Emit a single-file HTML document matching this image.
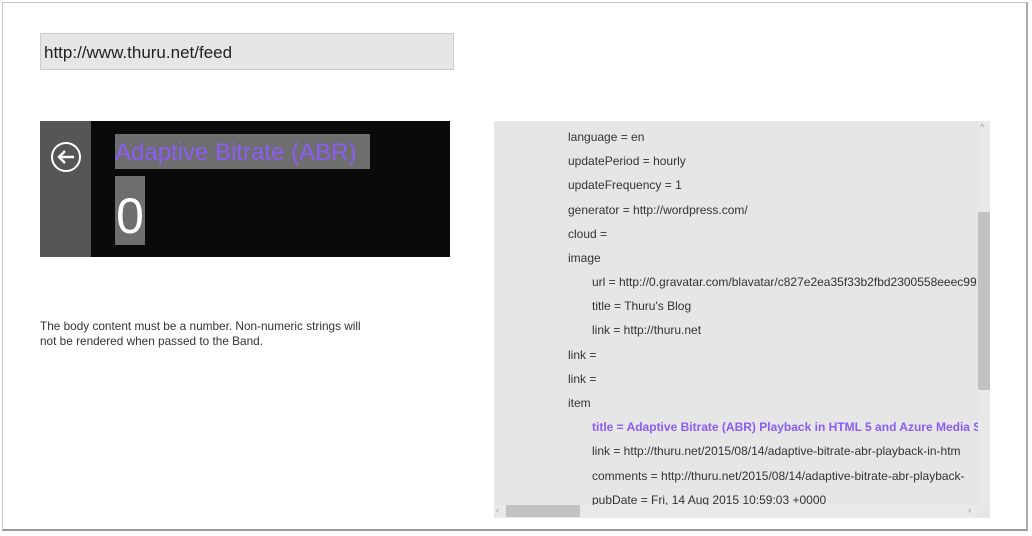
<!DOCTYPE html>
<html><head><meta charset="utf-8"><style>
body{margin:0;width:1032px;height:536px;background:#fff;position:relative;overflow:hidden;font-family:"Liberation Sans",sans-serif}
.frame{position:absolute;left:2px;top:2px;width:1026px;height:529px;border:1px solid #c8c8c8;border-bottom:2px solid #999;border-right:2px solid #aaa;box-sizing:border-box}
.tb{position:absolute;left:40px;top:33px;width:414px;height:37px;background:#e6e6e6;border:1px solid #ccc;box-sizing:border-box;font-size:17px;color:#222;padding:9px 0 0 3px}
.tile{position:absolute;left:40px;top:121px;width:410px;height:136px;background:#0a0a0a}
.side{position:absolute;left:0;top:0;width:51px;height:136px;background:#565656}
.ttl{position:absolute;left:75px;top:13px;height:35px;width:255px;background:#6e6e6e;color:#8b5cf6;font-size:24px;line-height:37px;white-space:nowrap}
.zero{position:absolute;left:75px;top:55px;width:30px;height:69px;background:#6e6e6e;color:#fff;font-size:50px;line-height:80px;text-align:center}
.body{position:absolute;left:40px;top:319px;font-size:11.8px;line-height:15px;color:#333}
.panel{position:absolute;left:494px;top:121px;width:496px;height:397px;background:#e6e6e6;overflow:hidden;font-size:12px;color:#333}
.l{position:absolute;white-space:nowrap}
.vs{position:absolute;right:0;top:0;width:12px;height:384px;background:#e9e9e9}
.vt{position:absolute;left:484px;top:91px;width:12px;height:178px;background:#c2c2c2}
.hs{position:absolute;left:0;bottom:0;width:484px;height:13px;background:#e9e9e9}
.ht{position:absolute;left:12px;top:384px;width:74px;height:12px;background:#c2c2c2}
.ar{position:absolute;font-size:9px;color:#999}
</style></head><body>
<div class="frame"></div>
<div class="tb">http://www.thuru.net/feed</div>
<div class="tile"><div class="side">
<svg width="51" height="136" style="position:absolute;left:0;top:0"><circle cx="26" cy="36" r="14" fill="none" stroke="#fff" stroke-width="2"/><path d="M34 36H19M25 30l-6 6 6 6" fill="none" stroke="#fff" stroke-width="2.4"/></svg></div>
<div class="ttl">Adaptive Bitrate (ABR)</div>
<div class="zero">0</div></div>
<div class="body">The body content must be a number. Non-numeric strings will<br>not be rendered when passed to the Band.</div>
<div class="panel">
<div class="l" style="left:74px;top:9px">language = en</div>
<div class="l" style="left:74px;top:33px">updatePeriod = hourly</div>
<div class="l" style="left:74px;top:57px">updateFrequency = 1</div>
<div class="l" style="left:74px;top:82px">generator = http://wordpress.com/</div>
<div class="l" style="left:74px;top:106px">cloud =</div>
<div class="l" style="left:74px;top:130px">image</div>
<div class="l" style="left:98px;top:154px">url = http://0.gravatar.com/blavatar/c827e2ea35f33b2fbd2300558eeec99</div>
<div class="l" style="left:98px;top:178px">title = Thuru's Blog</div>
<div class="l" style="left:98px;top:202px">link = http://thuru.net</div>
<div class="l" style="left:74px;top:227px">link =</div>
<div class="l" style="left:74px;top:251px">link =</div>
<div class="l" style="left:74px;top:275px">item</div>
<div class="l" style="left:98px;top:299px;color:#8b5cf6;font-weight:bold">title = Adaptive Bitrate (ABR) Playback in HTML 5 and Azure Media S</div>
<div class="l" style="left:98px;top:323px">link = http://thuru.net/2015/08/14/adaptive-bitrate-abr-playback-in-htm</div>
<div class="l" style="left:98px;top:348px">comments = http://thuru.net/2015/08/14/adaptive-bitrate-abr-playback-</div>
<div class="l" style="left:98px;top:372px">pubDate = Fri, 14 Aug 2015 10:59:03 +0000</div>
<div class="vs"></div><div class="vt"></div><div class="hs"></div><div class="ht"></div>
<div class="ar" style="left:486px;top:1px">^</div>
<div class="ar" style="left:2px;top:384px">&lsaquo;</div>
<div class="ar" style="left:474px;top:384px">&rsaquo;</div>
</div>
</body></html>
